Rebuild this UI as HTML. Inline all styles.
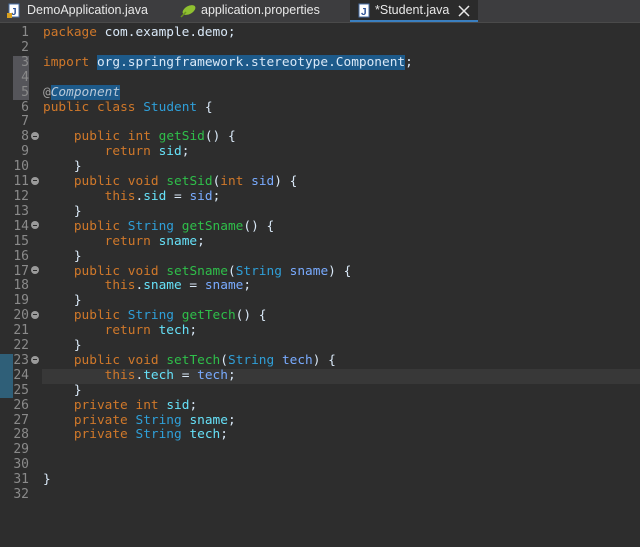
<!DOCTYPE html>
<html><head><meta charset="utf-8"><style>
body{margin:0;width:640px;height:547px;background:#2d2d2d;overflow:hidden;font-family:"DejaVu Sans Mono",monospace;}
#tabs{position:absolute;left:0;top:0;width:640px;height:22px;background:#3d3d3f;border-bottom:1px solid #4a4a4a;font-family:"Liberation Sans",sans-serif;font-size:12.5px;color:#e8e8e8;}
.tab{position:absolute;top:0;height:22px;line-height:21px;}
.act{background:#2b2b2b;border-bottom:2px solid #3a7fc0;height:20px;}
#ed{position:absolute;left:0;top:26px;width:640px;height:521px;}
.ln{position:absolute;left:0;width:29px;text-align:right;color:#8a8a8a;font-size:13px;line-height:14.9px;}
.code{position:absolute;left:43px;font-size:12.8px;line-height:14.9px;color:#d9e8f7;white-space:pre;}
.k{color:#d0782a}.c{color:#2f9fd8}.m{color:#2fbf4a}.f{color:#66e1f8}.p{color:#79abff}.a{color:#a0a0a0}
.sel{background:#1d5a8a}
.fold{position:absolute;left:31px;width:8px;height:8px;border-radius:50%;background:#9a9a9a;}
.fold:after{content:"";position:absolute;left:2px;top:3.5px;width:4px;height:1px;background:#2d2d2d}
</style></head><body>
<div id="tabs">
<div class="tab" style="left:6px;width:14px;"><svg width="14" height="16" style="margin-top:3px"><rect x="3" y="1" width="10" height="13" fill="#fff" stroke="#4a6fa5"/><text x="5" y="12" font-size="10" fill="#2a4f95" font-family="Liberation Sans" font-weight="bold">J</text><rect x="1" y="10" width="5" height="5" fill="#d8a020"/></svg></div>
<div class="tab" style="left:27px">DemoApplication.java</div>
<div class="tab" style="left:180px"><svg width="16" height="14" style="margin-top:4px"><ellipse cx="9" cy="6" rx="7" ry="4" fill="#8fc030" transform="rotate(-30 9 6)"/><line x1="1" y1="13" x2="6" y2="8" stroke="#6a9020" stroke-width="1.5"/></svg></div>
<div class="tab" style="left:201px">application.properties</div>
<div class="tab act" style="left:350px;width:128px"><svg width="14" height="16" style="position:absolute;left:7px;top:3px"><rect x="2" y="1" width="10" height="13" fill="#fff" stroke="#4a6fa5"/><text x="4" y="12" font-size="10" fill="#2a4f95" font-family="Liberation Sans" font-weight="bold">J</text></svg><span style="position:absolute;left:25px">*Student.java</span><svg width="12" height="12" style="position:absolute;left:108px;top:5px"><path d="M1 1L11 11M11 1L1 11" stroke="#e8e8e8" stroke-width="1.5"/></svg></div>
</div>
<div id="ed">
<div style="position:absolute;left:13px;top:29.8px;width:16px;height:44.7px;background:#55555a"></div>
<div style="position:absolute;left:42px;top:342.7px;width:598px;height:14.9px;background:#383838"></div>
<div style="position:absolute;left:0;top:327.8px;width:13px;height:44.7px;background:#2f5f78"></div>
<div class="ln" style="top:0">1<br>2<br>3<br>4<br>5<br>6<br>7<br>8<br>9<br>10<br>11<br>12<br>13<br>14<br>15<br>16<br>17<br>18<br>19<br>20<br>21<br>22<br>23<br>24<br>25<br>26<br>27<br>28<br>29<br>30<br>31<br>32</div>
<div class="fold" style="top:106px"></div><div class="fold" style="top:150.7px"></div><div class="fold" style="top:195.4px"></div><div class="fold" style="top:240.1px"></div><div class="fold" style="top:284.8px"></div><div class="fold" style="top:329.5px"></div>
<div class="code" style="top:0"><span class="k">package</span> com.example.demo;

<span class="k">import</span> <span class="sel">org.springframework.stereotype.Component</span>;

<span class="a">@</span><span class="a sel" style="font-style:italic;color:#b8c8d8">Component</span>
<span class="k">public</span> <span class="k">class</span> <span class="c">Student</span> {

    <span class="k">public</span> <span class="k">int</span> <span class="m">getSid</span>() {
        <span class="k">return</span> <span class="f">sid</span>;
    }
    <span class="k">public</span> <span class="k">void</span> <span class="m">setSid</span>(<span class="k">int</span> <span class="p">sid</span>) {
        <span class="k">this</span>.<span class="f">sid</span> = <span class="p">sid</span>;
    }
    <span class="k">public</span> <span class="c">String</span> <span class="m">getSname</span>() {
        <span class="k">return</span> <span class="f">sname</span>;
    }
    <span class="k">public</span> <span class="k">void</span> <span class="m">setSname</span>(<span class="c">String</span> <span class="p">sname</span>) {
        <span class="k">this</span>.<span class="f">sname</span> = <span class="p">sname</span>;
    }
    <span class="k">public</span> <span class="c">String</span> <span class="m">getTech</span>() {
        <span class="k">return</span> <span class="f">tech</span>;
    }
    <span class="k">public</span> <span class="k">void</span> <span class="m">setTech</span>(<span class="c">String</span> <span class="p">tech</span>) {
        <span class="k">this</span>.<span class="f">tech</span> = <span class="p">tech</span>;
    }
    <span class="k">private</span> <span class="k">int</span> <span class="f">sid</span>;
    <span class="k">private</span> <span class="c">String</span> <span class="f">sname</span>;
    <span class="k">private</span> <span class="c">String</span> <span class="f">tech</span>;


}
</div>
</div>
</body></html>
